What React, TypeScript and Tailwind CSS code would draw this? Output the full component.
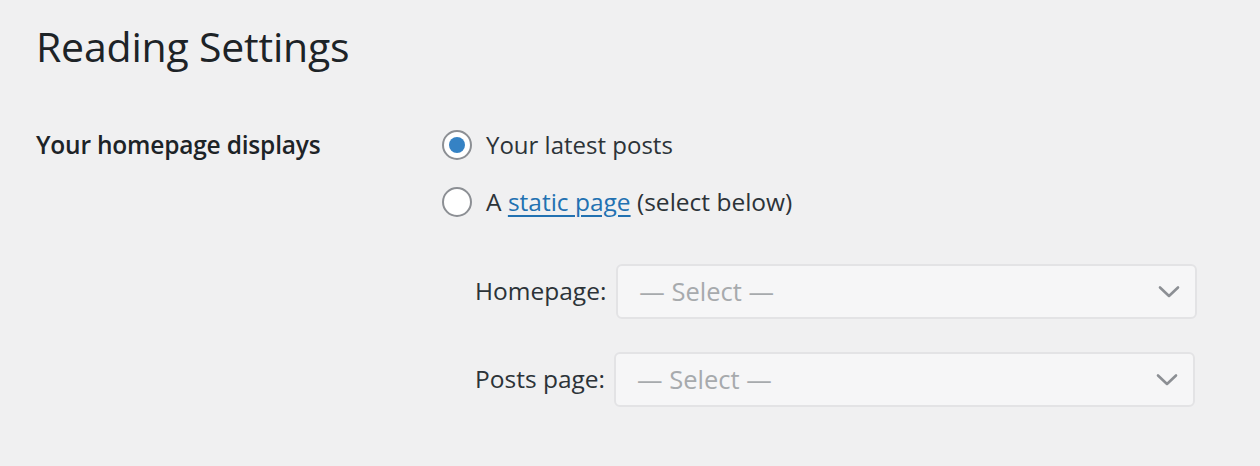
function Radio({ checked }: { checked?: boolean }) {
  return (
    <span className="w-[30px] h-[30px] rounded-full border-2 border-[#8c8f94] bg-white flex items-center justify-center shrink-0">
      {checked && <span className="w-[16px] h-[16px] rounded-full bg-[#3582c4]" />}
    </span>
  );
}

function SelectBox({ width }: { width: string }) {
  return (
    <div
      className={`${width} h-[55px] rounded-[6px] border-2 border-[#e3e3e5] bg-[#f6f6f7] flex items-center justify-between pl-[21px] pr-[15px]`}
    >
      <span className="text-[25.5px] text-[#a7aaad]">— Select —</span>
      <svg width="22" height="14" viewBox="0 0 22 14" fill="none" className="text-[#8c8f94]">
        <path d="M2 2.5 L11 11 L20 2.5" stroke="currentColor" strokeWidth="2.6" strokeLinecap="round" strokeLinejoin="round" />
      </svg>
    </div>
  );
}

export default function App() {
  return (
    <div
      className="w-[1260px] h-[466px] bg-[#f0f0f1] text-[#1d2327] pl-[36px] pt-[18px] overflow-hidden"
      style={{ fontFamily: '"Open Sans", "Noto Sans", sans-serif' }}
    >
      <h1 className="text-[41px] leading-[56px] font-normal tracking-[-0.2px]">Reading Settings</h1>

      <div className="flex mt-[54px]">
        <div className="w-[406px] text-[24.5px] font-semibold leading-[34px] tracking-[-0.2px]">
          Your homepage displays
        </div>

        <div className="flex flex-col">
          <label className="flex items-center gap-[14px] h-[34px] text-[24px] text-[#2c3338]">
            <Radio checked />
            <span>Your latest posts</span>
          </label>
          <label className="flex items-center gap-[14px] h-[34px] mt-[23px] text-[24.5px] text-[#2c3338]">
            <Radio />
            <span>
              A{" "}
              <a href="#" className="text-[#2271b1] underline underline-offset-[4px]">
                static page
              </a>{" "}
              (select below)
            </span>
          </label>

          <div className="pl-[33px] mt-[45px] flex flex-col gap-[33px]">
            <div className="flex items-center gap-[10px] text-[24.5px] text-[#2c3338]">
              <span>Homepage:</span>
              <SelectBox width="w-[581px]" />
            </div>
            <div className="flex items-center gap-[9px] text-[24.5px] text-[#2c3338]">
              <span>Posts page:</span>
              <SelectBox width="w-[581px]" />
            </div>
          </div>
        </div>
      </div>
    </div>
  );
}
